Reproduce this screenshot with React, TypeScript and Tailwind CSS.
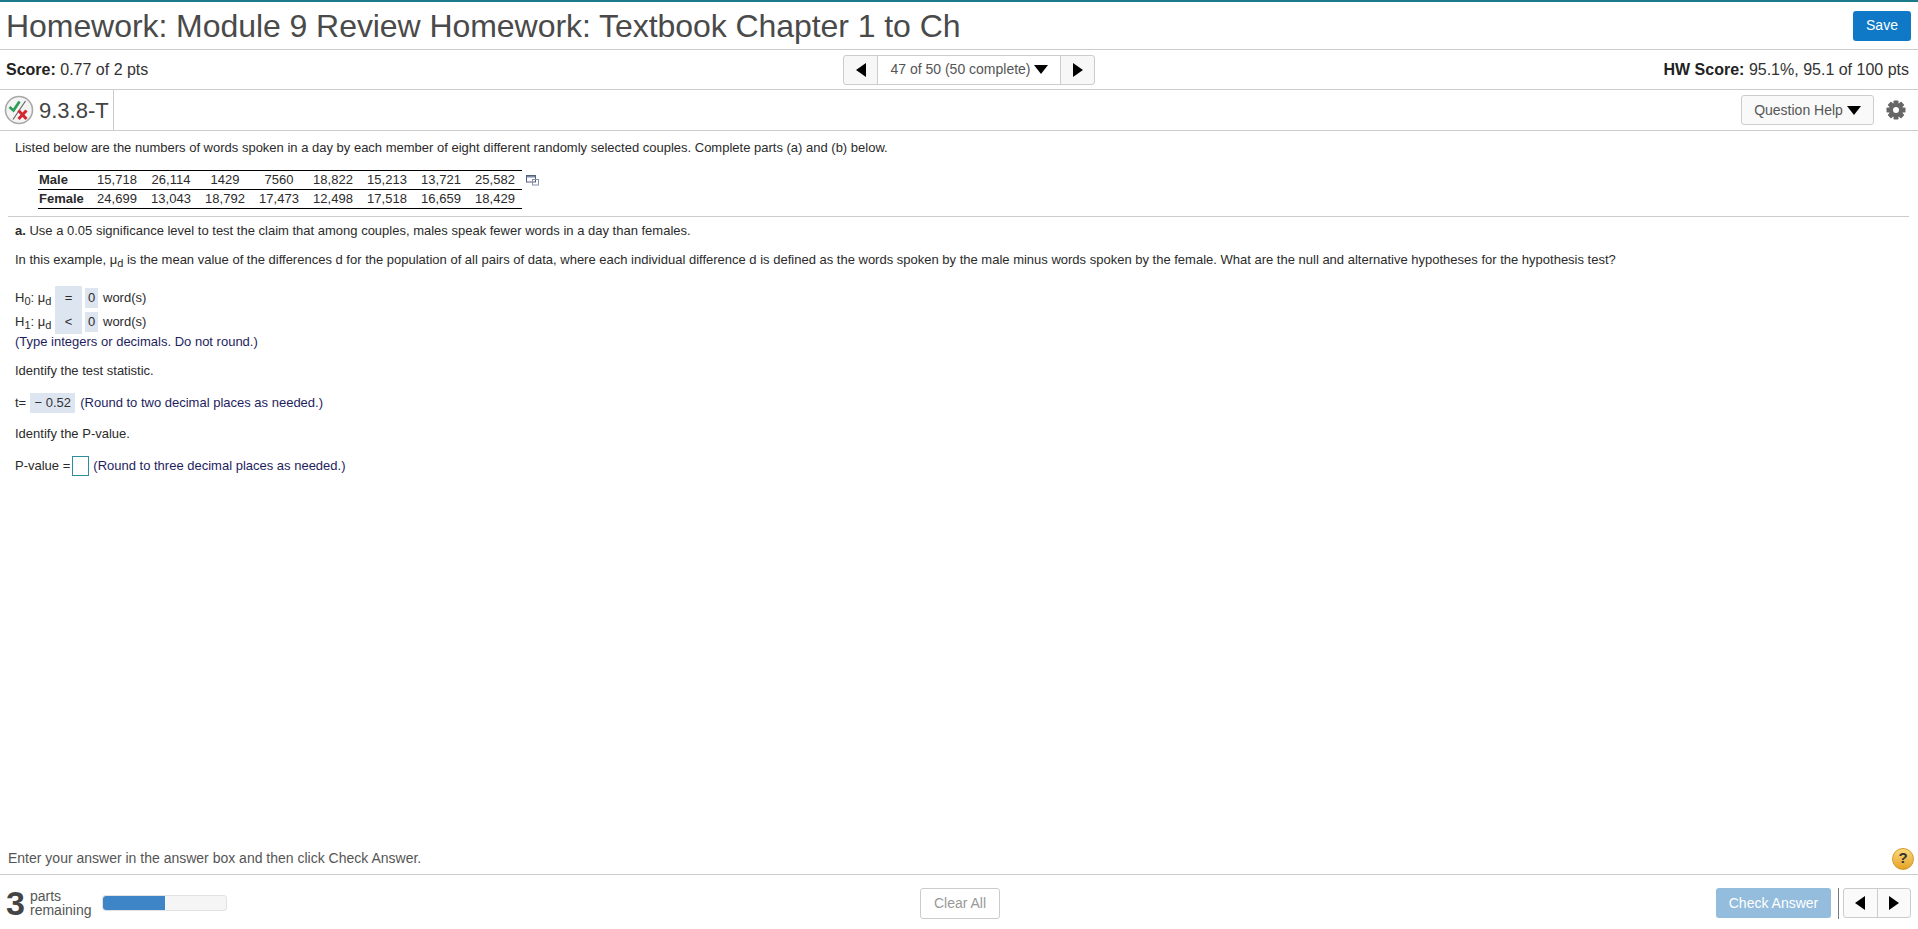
const male = ["15,718", "26,114", "1429", "7560", "18,822", "15,213", "13,721", "25,582"];
const female = ["24,699", "13,043", "18,792", "17,473", "12,498", "17,518", "16,659", "18,429"];

function TriLeft() {
  return (
    <svg width="10" height="14" viewBox="0 0 10 14" className="block">
      <polygon points="10,0 10,14 0,7" fill="#000" />
    </svg>
  );
}

function TriRight() {
  return (
    <svg width="10" height="14" viewBox="0 0 10 14" className="block">
      <polygon points="0,0 10,7 0,14" fill="#000" />
    </svg>
  );
}

function TriDown() {
  return (
    <svg width="14" height="9" viewBox="0 0 14 9" className="block">
      <polygon points="0,0 14,0 7,9" fill="#000" />
    </svg>
  );
}

function StatusIcon() {
  return (
    <svg width="30" height="30" viewBox="0 0 30 30" className="block">
      <circle cx="15" cy="15" r="13.5" fill="#f4f4f4" stroke="#a8a8a8" strokeWidth="1.6" />
      <path d="M21.5 6 L9 24.5" stroke="#666" strokeWidth="1.2" />
      <path d="M5.5 12 L9.5 15.5 L15.5 6.5" fill="none" stroke="#2f9e5b" strokeWidth="2.8" />
      <path d="M14.5 15.5 L22.5 24 M22.5 15.5 L14.5 24" stroke="#d3262f" strokeWidth="3" />
    </svg>
  );
}

function Gear() {
  return (
    <svg width="20" height="20" viewBox="0 0 20 20" className="block">
      <g fill="#666">
        <rect x="7.5" y="0.5" width="5" height="19" rx="0.8" />
        <rect x="7.5" y="0.5" width="5" height="19" rx="0.8" transform="rotate(45 10 10)" />
        <rect x="7.5" y="0.5" width="5" height="19" rx="0.8" transform="rotate(90 10 10)" />
        <rect x="7.5" y="0.5" width="5" height="19" rx="0.8" transform="rotate(135 10 10)" />
        <circle cx="10" cy="10" r="7" />
      </g>
      <circle cx="10" cy="10" r="3" fill="#fff" />
    </svg>
  );
}

function PopoutIcon() {
  return (
    <svg width="13" height="11" viewBox="0 0 13 11" className="block">
      <rect x="0.5" y="0.5" width="9" height="6.5" fill="#fff" stroke="#55607a" />
      <rect x="6.5" y="4.5" width="6" height="5.5" fill="none" stroke="#8a93a8" />
      <rect x="1" y="1" width="8" height="1.5" fill="#7d8aa5" />
    </svg>
  );
}

function Mu({ sub }: { sub: string }) {
  return (
    <>
      H<sub className="text-[11px]">{sub}</sub>: μ<sub className="text-[11px]">d</sub>
    </>
  );
}

export default function App() {
  return (
    <div className="h-[929px] w-[1918px] flex flex-col bg-white text-[#2b2b2b] font-['Liberation_Sans',Arial,sans-serif] text-[13px] overflow-hidden">
      {/* titulo */}
      <div className="h-[50px] shrink-0 border-t-2 border-[#1b7a8c] border-b border-b-[#ccc] flex items-center justify-between pl-[6px] pr-[7px]">
        <div className="text-[32px] leading-none tracking-[-0.06px] text-[#4a4a4a]">
          Homework: Module 9 Review Homework: Textbook Chapter 1 to Ch
        </div>
        <button className="w-[58px] h-[30px] rounded-[3px] bg-[#0f79c8] text-white text-[14px]">Save</button>
      </div>

      {/* puntaje */}
      <div className="h-[40px] shrink-0 border-b border-[#ccc] grid grid-cols-[843px_252px_1fr] items-center pl-[6px] pr-[9px]">
        <div className="text-[16px] text-[#222]">
          <b>Score:</b> <span className="text-[#333]">0.77 of 2 pts</span>
        </div>
        <div className="h-[30px] -ml-[6px] w-[252px] flex border border-[#ccc] rounded-[3px] bg-[#f7f7f7]">
          <div className="w-[34px] flex items-center justify-center border-r border-[#ccc]">
            <TriLeft />
          </div>
          <div className="w-[182px] flex items-center justify-center gap-[3px] bg-white text-[14px] text-[#555]">
            47 of 50 (50 complete)
            <TriDown />
          </div>
          <div className="flex-1 flex items-center justify-center border-l border-[#ccc]">
            <TriRight />
          </div>
        </div>
        <div className="text-[16px] text-right text-[#222]">
          <b>HW Score:</b> <span className="text-[#333]">95.1%, 95.1 of 100 pts</span>
        </div>
      </div>

      {/* pregunta */}
      <div className="h-[41px] shrink-0 border-b border-[#ccc] flex items-center pl-[4px] pr-[12px]">
        <StatusIcon />
        <div className="ml-[5px] w-[75px] h-full border-r border-[#ccc] flex items-center whitespace-nowrap text-[22px] text-[#444]">
          9.3.8-T
        </div>
        <div className="flex-1" />
        <button className="w-[133px] h-[30px] rounded-[3px] border border-[#ccc] bg-[#f9f9f9] flex items-center justify-center gap-[4px] text-[14px] text-[#555]">
          Question Help
          <TriDown />
        </button>
        <div className="ml-[12px]">
          <Gear />
        </div>
      </div>

      {/* contenido */}
      <div className="flex-1 px-[15px] pt-[9px]">
        <p className="leading-[16px]">
          Listed below are the numbers of words spoken in a day by each member of eight different randomly selected couples. Complete parts (a) and (b) below.
        </p>

        <div className="flex items-center ml-[23px] mt-[14px]">
          <table className="border-t border-b border-black leading-[18px]">
            <tbody>
              <tr className="h-[19px] border-b border-black">
                <td className="w-[52px] pl-[1px] font-bold">Male</td>
                {male.map((v) => (
                  <td key={v} className="w-[54px] text-center">{v}</td>
                ))}
              </tr>
              <tr className="h-[18px]">
                <td className="w-[52px] pl-[1px] font-bold">Female</td>
                {female.map((v) => (
                  <td key={v} className="w-[54px] text-center">{v}</td>
                ))}
              </tr>
            </tbody>
          </table>
          <div className="ml-[4px] -mt-[19px]">
            <PopoutIcon />
          </div>
        </div>

        <div className="h-px bg-[#ccc] mt-[7px] -mr-[6px] -ml-[7px]" />

        <p className="mt-[6px] leading-[16px]">
          <b>a.</b> Use a 0.05 significance level to test the claim that among couples, males speak fewer words in a day than females.
        </p>
        <p className="mt-[13px] leading-[16px]">
          In this example, μ<sub className="text-[11px]">d</sub> is the mean value of the differences d for the population of all pairs of data, where each individual difference d is defined as the words spoken by the male minus words spoken by the female. What are the null and alternative hypotheses for the hypothesis test?
        </p>

        <div className="mt-[18px] grid grid-cols-[40px_27px_3px_13px_1fr] w-[220px] leading-[24px]">
          <div className="h-[24px]"><Mu sub="0" /></div>
          <div className="h-[24px] bg-[#dde5f1] text-center">=</div>
          <div />
          <div className="h-[20px] mt-[2px] bg-[#dde5f1] text-center leading-[20px]">0</div>
          <div className="pl-[5px]">word(s)</div>
          <div className="h-[24px]"><Mu sub="1" /></div>
          <div className="h-[24px] bg-[#dde5f1] text-center">&lt;</div>
          <div />
          <div className="h-[20px] mt-[2px] bg-[#dde5f1] text-center leading-[20px]">0</div>
          <div className="pl-[5px]">word(s)</div>
        </div>
        <p className="leading-[16px] text-[#1e1e5e]">(Type integers or decimals. Do not round.)</p>

        <p className="mt-[13px] leading-[16px]">Identify the test statistic.</p>

        <div className="mt-[14px] flex items-center h-[20px]">
          t=
          <span className="ml-[4px] w-[45px] h-[20px] bg-[#dde5f1] text-center leading-[20px] text-[#333]">− 0.52</span>
          <span className="ml-[5px] text-[#1e1e5e]">(Round to two decimal places as needed.)</span>
        </div>

        <p className="mt-[13px] leading-[16px]">Identify the P-value.</p>

        <div className="mt-[14px] flex items-center h-[20px]">
          P-value =
          <span className="ml-[2px] w-[17px] h-[20px] border border-[#2f8c9e] bg-white" />
          <span className="ml-[4px] text-[#1e1e5e]">(Round to three decimal places as needed.)</span>
        </div>
      </div>

      {/* instruccion */}
      <div className="h-[34px] shrink-0 border-b border-[#ccc] flex items-center justify-between pl-[8px] pr-[4px] pt-[2px]">
        <span className="text-[14px] text-[#555]">Enter your answer in the answer box and then click Check Answer.</span>
        <div className="w-[22px] h-[22px] rounded-full bg-gradient-to-b from-[#fbd97a] to-[#e5a21f] border border-[#d39a2a] flex items-center justify-center text-[15px] font-bold text-[#333]">
          ?
        </div>
      </div>

      {/* pie */}
      <div className="h-[54px] shrink-0 grid grid-cols-[920px_1fr] items-center pl-[6px] pr-[7px] pt-[2px]">
        <div className="flex items-center -mr-[6px]">
          <div className="w-[24px] text-[34px] leading-none font-bold text-[#444]">3</div>
          <div className="text-[14px] leading-[14px] text-[#555] w-[72px]">
            parts
            <br />
            remaining
          </div>
          <div className="w-[125px] h-[16px] rounded-[3px] bg-[#f5f5f5] border border-[#e2e2e2] overflow-hidden">
            <div className="h-full bg-[#3d85c6] rounded-l-[3px]" style={{ width: `${(63 / 125) * 100}%` }} />
          </div>
        </div>
        <div className="flex items-center justify-between -ml-[6px]">
          <button className="w-[80px] h-[31px] rounded-[3px] border border-[#ccc] bg-white text-[14px] text-[#999]">
            Clear All
          </button>
          <div className="flex items-center">
            <button className="w-[115px] h-[30px] rounded-[3px] bg-[#94bcdc] text-white text-[14px]">Check Answer</button>
            <div className="w-px h-[31px] bg-[#777] ml-[7px] mr-[4px]" />
            <div className="w-[68px] h-[30px] flex border border-[#ccc] rounded-[3px] bg-[#fafafa]">
              <div className="flex-1 flex items-center justify-center border-r border-[#ccc]">
                <TriLeft />
              </div>
              <div className="flex-1 flex items-center justify-center">
                <TriRight />
              </div>
            </div>
          </div>
        </div>
      </div>
    </div>
  );
}
